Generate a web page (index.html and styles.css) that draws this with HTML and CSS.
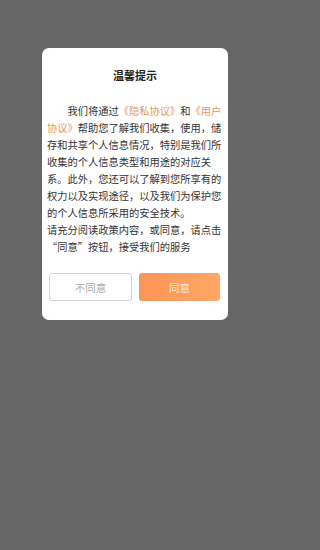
FILE: index.html
```html
<!DOCTYPE html>
<html lang="zh-CN">
<head>
<meta charset="utf-8">
<link rel="stylesheet" href="styles.css">
</head>
<body>
<div class="overlay">
  <div class="dialog">
    <div class="title">温馨提示</div>
    <div class="content">
      <p class="para">我们将通过<span class="link">《隐私协议》</span>和<span class="link">《用户协议》</span>帮助您了解我们收集，使用，储存和共享个人信息情况，特别是我们所收集的个人信息类型和用途的对应关系。此外，您还可以了解到您所享有的权力以及实现途径，以及我们为保护您的个人信息所采用的安全技术。</p>
      <p class="note">请充分阅读政策内容，或同意，请点击“同意”按钮，接受我们的服务</p>
    </div>
    <div class="actions">
      <button class="btn btn-cancel">不同意</button>
      <button class="btn btn-ok">同意</button>
    </div>
  </div>
</div>
</body>
</html>
```
FILE: styles.css
```css
html, body {
  margin: 0;
  padding: 0;
  min-height: 100%;
  background: #666666;
  font-family: "Noto Sans CJK SC", "Noto Sans", sans-serif;
}
.overlay {
  padding: 48px 0 0 42px;
}
.dialog {
  width: 186px;
  background: #ffffff;
  border-radius: 7px;
  box-sizing: border-box;
  padding: 19px 0 19px 0;
}
.title {
  text-align: center;
  font-size: 11px;
  line-height: 16px;
  font-weight: bold;
  color: #222222;
}
.content {
  margin-top: 19px;
  padding: 0 6px 0 5px;
  font-size: 10.25px;
  line-height: 17px;
  color: #333333;
  text-spacing-trim: space-all;
}
.para {
  margin: 0;
  text-indent: 2em;
}
.note {
  margin: 0;
}
.link {
  color: #e3965f;
}
.actions {
  display: flex;
  gap: 7px;
  padding: 0 8px 0 7px;
  margin-top: 18px;
}
.btn {
  flex: 1;
  height: 28px;
  border-radius: 3px;
  font-family: inherit;
  font-size: 10.5px;
  padding: 0;
  box-sizing: border-box;
}
.btn-cancel {
  background: #ffffff;
  border: 1px solid #cdd1d8;
  color: #a9a9a9;
}
.btn-ok {
  border: none;
  background: linear-gradient(90deg, #fd9457, #ffa866);
  color: #ffe8d6;
}
```
